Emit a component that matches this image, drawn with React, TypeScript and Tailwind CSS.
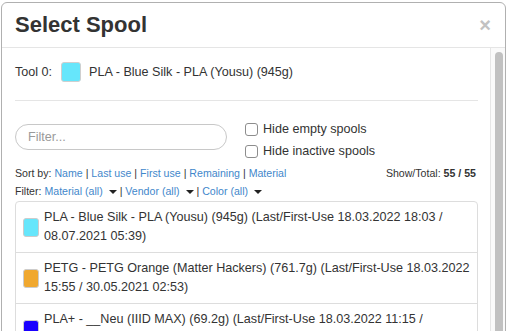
import React from "react";

type Spool = {
  color: string;
  text: string;
};

const SPOOLS: Spool[] = [
  {
    color: "#66e6fb",
    text: "PLA - Blue Silk - PLA (Yousu) (945g) (Last/First-Use 18.03.2022 18:03 / 08.07.2021 05:39)",
  },
  {
    color: "#f0a82f",
    text: "PETG - PETG Orange (Matter Hackers) (761.7g) (Last/First-Use 18.03.2022 15:55 / 30.05.2021 02:53)",
  },
  {
    color: "#1a00ff",
    text: "PLA+ - __Neu (IIID MAX) (69.2g) (Last/First-Use 18.03.2022 11:15 / 17.03.2022 19:42)",
  },
];

function Caret() {
  return (
    <span className="ml-[6px] inline-block h-0 w-0 border-x-[4px] border-t-[4px] border-x-transparent border-t-[#222] align-middle" />
  );
}

function Checkbox({ label }: { label: string }) {
  return (
    <label className="flex h-[22px] items-center gap-[5px]">
      <span className="h-[13px] w-[13px] rounded-[3px] border border-[#8d8d8d] bg-white" />
      <span>{label}</span>
    </label>
  );
}

export default function App() {
  return (
    <div className="h-[331px] w-[507px] overflow-hidden bg-white pl-[1px] pt-[2px] font-['Liberation_Sans',Arial,sans-serif] text-[12.6px] text-[#333]">
      <div className="flex h-[400px] w-[505px] flex-col rounded-[6px] border border-[#b0b0b0] bg-white">
        {/* Header */}
        <div className="flex h-[45px] flex-shrink-0 items-center justify-between border-b border-[#e5e5e5] pl-[13px] pr-[14px]">
          <h4 className="text-[22px] font-bold leading-none text-[#333]">Select Spool</h4>
          <span className="text-[20px] font-bold leading-none text-[#c2c2c2]">×</span>
        </div>

        {/* Body */}
        <div className="flex min-h-0 flex-1">
          <div className="flex-1 pl-[13px] pr-[12px]">
            {/* Tool row */}
            <div className="mt-[14px] flex h-[20px] items-center">
              <span>Tool 0:</span>
              <span className="ml-[9px] h-[20px] w-[20px] rounded-[3px] border border-[#cfcfcf] bg-[#66e6fb]" />
              <span className="ml-[8px]">PLA - Blue Silk - PLA (Yousu) (945g)</span>
            </div>
            <div className="mt-[18px] border-t border-[#e5e5e5]" />

            {/* Filter + checkboxes */}
            <div className="mt-[17px] flex items-start gap-[18px]">
              <div className="mt-[6px] flex h-[26px] w-[212px] items-center rounded-full border border-[#c8c8c8] px-[12px] text-[#9a9a9a]">
                Filter...
              </div>
              <div className="flex flex-col">
                <Checkbox label="Hide empty spools" />
                <Checkbox label="Hide inactive spools" />
              </div>
            </div>

            {/* Sort row */}
            <div className="mt-[3px] flex h-[18px] items-center justify-between pr-[2px] text-[10.6px]">
              <div>
                Sort by: <a className="text-[#3f87cb]">Name</a> | <a className="text-[#3f87cb]">Last use</a> |{" "}
                <a className="text-[#3f87cb]">First use</a> | <a className="text-[#3f87cb]">Remaining</a> |{" "}
                <a className="text-[#3f87cb]">Material</a>
              </div>
              <div>
                Show/Total: <b>55 / 55</b>
              </div>
            </div>

            {/* Filter row */}
            <div className="flex h-[18px] items-center text-[10.6px]">
              <span>Filter:&nbsp;</span>
              <a className="text-[#3f87cb]">Material (all)</a>
              <Caret />
              <span>&nbsp;|&nbsp;</span>
              <a className="text-[#3f87cb]">Vendor (all)</a>
              <Caret />
              <span>&nbsp;|&nbsp;</span>
              <a className="text-[#3f87cb]">Color (all)</a>
              <Caret />
            </div>

            {/* Spool list */}
            <div className="rounded-[4px] border border-[#dddddd]">
              {SPOOLS.map((s, i) => (
                <div
                  key={i}
                  className={
                    "flex items-center gap-[5px] py-[6px] pl-[7px] pr-[3px] " + (i > 0 ? "border-t border-[#dddddd]" : "")
                  }
                >
                  <span
                    className="h-[19px] w-[16px] flex-shrink-0 rounded-[3px] border border-[#cccccc]"
                    style={{ backgroundColor: s.color }}
                  />
                  <span className="leading-[19px]">{s.text}</span>
                </div>
              ))}
            </div>
          </div>

          {/* Scrollbar track */}
          <div className="w-[15px] flex-shrink-0 border-l border-[#e6e6e6] bg-[#fafafa] pl-[4px] pt-[4px]">
            <div className="h-[400px] w-[8px] rounded-full bg-[#c1c1c1]" />
          </div>
        </div>
      </div>
    </div>
  );
}
